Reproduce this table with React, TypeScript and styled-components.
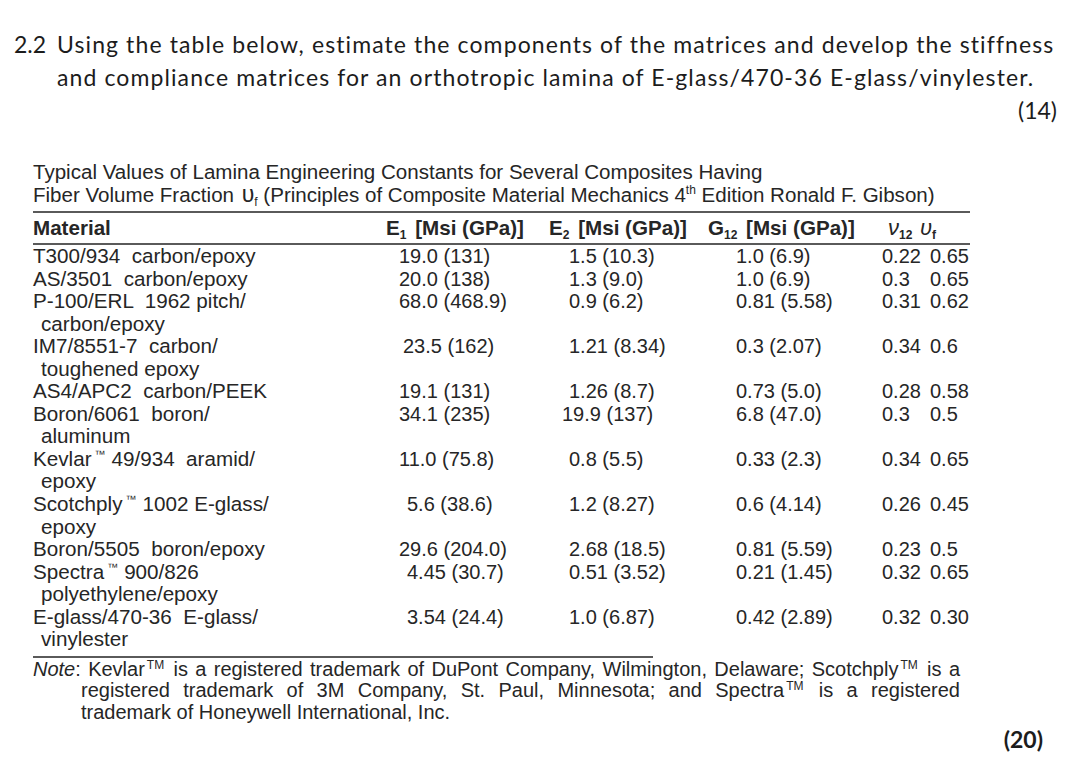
import React from 'react';
import styled, { createGlobalStyle } from 'styled-components';

const Global = createGlobalStyle`
  html, body { margin: 0; padding: 0; background: #ffffff; }
  body { width: 1080px; height: 777px; overflow: hidden; }
`;

const Page = styled.div`
  width: 1080px;
  height: 777px;
  box-sizing: border-box;
  padding: 28px 23px 0 14px;
  color: #1c1c1c;
  display: flex;
  flex-direction: column;
`;

const Question = styled.div`
  font-family: Lato, "Open Sans", sans-serif;
  font-size: 23px;
  line-height: 33px;
  display: flex;
`;

const QNum = styled.span`
  width: 43px;
  flex: none;
`;

const QBody = styled.div`
  flex: 1;
`;

const QLine = styled.div`
  letter-spacing: 1.1px;
  white-space: nowrap;
`;

const Marks = styled.div<{ $bold?: boolean; $right?: number }>`
  font-family: Lato, "Open Sans", sans-serif;
  font-size: 23px;
  line-height: 33px;
  text-align: right;
  font-weight: ${(p) => (p.$bold ? 700 : 400)};
  margin-right: ${(p) => p.$right ?? 0}px;
`;

const TableBlock = styled.div`
  margin: 33px 0 0 19px;
  width: 937px;
  font-family: "Liberation Sans", Arial, sans-serif;
  font-size: 20px;
  color: #262626;
`;

const Title = styled.div`
  font-size: 20.55px;
  line-height: 23px;
  white-space: nowrap;
`;

const Upsilon = styled.span`
  font-size: 23px;
  margin-left: 2px;
`;

const Rule = styled.div<{ $width?: number; $top?: number }>`
  height: 0;
  border-top: 2px solid #5a5a5a;
  width: ${(p) => (p.$width ? `${p.$width}px` : '100%')};
  margin-top: ${(p) => p.$top ?? 0}px;
`;

const cols = '353px 163px 159px 174px 38px 50px';

const HeaderRow = styled.div`
  display: grid;
  grid-template-columns: ${cols};
  height: 30px;
  align-items: center;
  font-weight: 700;
  font-size: 20.6px;
  white-space: nowrap;
`;

const HeadCell = styled.div<{ $pad?: number }>`
  padding-left: ${(p) => p.$pad ?? 0}px;
`;

const Sub = styled.sub<{ $gap?: number }>`
  font-size: 12px;
  vertical-align: -4px;
  line-height: 0;
  margin-right: ${(p) => p.$gap ?? 0}px;
`;

const Greek = styled.span`
  font-style: italic;
  font-weight: 400;
  font-size: 22px;
`;

const Row = styled.div`
  display: grid;
  grid-template-columns: ${cols};
  line-height: 22.55px;
  white-space: pre;
`;

const MatCell = styled.div`
  font-size: 20.65px;
`;

const MatLine = styled.div<{ $cont?: boolean }>`
  padding-left: ${(p) => (p.$cont ? 8 : 0)}px;
`;

const Cell = styled.div<{ $pad: number }>`
  padding-left: ${(p) => p.$pad}px;
`;

const Sup = styled.sup`
  font-size: 11px;
  vertical-align: 8px;
  line-height: 0;
  margin: 0 6px 0 3px;
`;

const Note = styled.div`
  margin-top: 1px;
  width: 927px;
  box-sizing: border-box;
  padding-left: 48px;
  line-height: 21.5px;
`;

const NoteLine = styled.div<{ $first?: boolean; $justify?: boolean }>`
  margin-left: ${(p) => (p.$first ? -48 : 0)}px;
  text-align: ${(p) => (p.$justify ? 'justify' : 'left')};
  text-align-last: ${(p) => (p.$justify ? 'justify' : 'left')};
  white-space: nowrap;
`;

const Em = styled.span`
  font-style: italic;
`;

type R = {
  m: React.ReactNode[];
  e1: string;
  e1p?: number;
  e2: string;
  e2p?: number;
  g: string;
  v: string;
  u: string;
};

const TM = () => <Sup>™</Sup>;

const rows: R[] = [
  { m: ['T300/934  carbon/epoxy'], e1: '19.0 (131)', e2: '1.5 (10.3)', g: '1.0 (6.9)', v: '0.22', u: '0.65' },
  { m: ['AS/3501  carbon/epoxy'], e1: '20.0 (138)', e2: '1.3 (9.0)', g: '1.0 (6.9)', v: '0.3', u: '0.65' },
  { m: ['P-100/ERL  1962 pitch/', 'carbon/epoxy'], e1: '68.0 (468.9)', e2: '0.9 (6.2)', g: '0.81 (5.58)', v: '0.31', u: '0.62' },
  { m: ['IM7/8551-7  carbon/', 'toughened epoxy'], e1: '23.5 (162)', e1p: 17, e2: '1.21 (8.34)', g: '0.3 (2.07)', v: '0.34', u: '0.6' },
  { m: ['AS4/APC2  carbon/PEEK'], e1: '19.1 (131)', e2: '1.26 (8.7)', g: '0.73 (5.0)', v: '0.28', u: '0.58' },
  { m: ['Boron/6061  boron/', 'aluminum'], e1: '34.1 (235)', e2: '19.9 (137)', e2p: 13, g: '6.8 (47.0)', v: '0.3', u: '0.5' },
  { m: [<>Kevlar<TM />49/934  aramid/</>, 'epoxy'], e1: '11.0 (75.8)', e2: '0.8 (5.5)', g: '0.33 (2.3)', v: '0.34', u: '0.65' },
  { m: [<>Scotchply<TM />1002 E-glass/</>, 'epoxy'], e1: '5.6 (38.6)', e1p: 21, e2: '1.2 (8.27)', g: '0.6 (4.14)', v: '0.26', u: '0.45' },
  { m: ['Boron/5505  boron/epoxy'], e1: '29.6 (204.0)', e2: '2.68 (18.5)', g: '0.81 (5.59)', v: '0.23', u: '0.5' },
  { m: [<>Spectra<TM />900/826</>, 'polyethylene/epoxy'], e1: '4.45 (30.7)', e1p: 21, e2: '0.51 (3.52)', g: '0.21 (1.45)', v: '0.32', u: '0.65' },
  { m: ['E-glass/470-36  E-glass/', 'vinylester'], e1: '3.54 (24.4)', e1p: 21, e2: '1.0 (6.87)', g: '0.42 (2.89)', v: '0.32', u: '0.30' },
];

const NoteSup = styled.sup`
  font-size: 12px;
  vertical-align: 7px;
  line-height: 0;
  margin: 0 2px 0 2px;
`;

const OrdSup = styled.sup`
  font-size: 12px;
  line-height: 0;
`;

export default function App() {
  return (
    <>
      <Global />
      <Page>
        <Question>
          <QNum>2.2</QNum>
          <QBody>
            <QLine>Using the table below, estimate the components of the matrices and develop the stiffness</QLine>
            <QLine>and compliance matrices for an orthotropic lamina of E-glass/470-36 E-glass/vinylester.</QLine>
            <Marks>(14)</Marks>
          </QBody>
        </Question>

        <TableBlock>
          <Title>Typical Values of Lamina Engineering Constants for Several Composites Having</Title>
          <Title>
            Fiber Volume Fraction <Upsilon>υ</Upsilon>
            <Sub>f</Sub> (Principles of Composite Material Mechanics 4<OrdSup>th</OrdSup> Edition Ronald F. Gibson)
          </Title>
          <Rule $top={5} />
          <HeaderRow>
            <HeadCell>Material</HeadCell>
            <HeadCell>
              E<Sub $gap={3}>1</Sub> [Msi (GPa)]
            </HeadCell>
            <HeadCell>
              E<Sub $gap={3}>2</Sub> [Msi (GPa)]
            </HeadCell>
            <HeadCell>
              G<Sub $gap={3}>12</Sub> [Msi (GPa)]
            </HeadCell>
            <HeadCell $pad={6}>
              <Greek>ν</Greek>
              <Sub>12</Sub>
            </HeadCell>
            <HeadCell>
              <Greek>υ</Greek>
              <Sub>f</Sub>
            </HeadCell>
          </HeaderRow>
          <Rule />
          {rows.map((r, i) => (
            <Row key={i}>
              <MatCell>
                {r.m.map((l, j) => (
                  <MatLine key={j} $cont={j > 0}>
                    {l}
                  </MatLine>
                ))}
              </MatCell>
              <Cell $pad={r.e1p ?? 13}>{r.e1}</Cell>
              <Cell $pad={r.e2p ?? 20}>{r.e2}</Cell>
              <Cell $pad={28}>{r.g}</Cell>
              <Cell $pad={0}>{r.v}</Cell>
              <Cell $pad={10}>{r.u}</Cell>
            </Row>
          ))}
          <Rule $width={620} $top={5} />
          <Note>
            <NoteLine $first $justify>
              <Em>Note</Em>: Kevlar<NoteSup>TM</NoteSup> is a registered trademark of DuPont Company, Wilmington, Delaware; Scotchply<NoteSup>TM</NoteSup> is a
            </NoteLine>
            <NoteLine $justify>
              registered trademark of 3M Company, St. Paul, Minnesota; and Spectra<NoteSup>TM</NoteSup> is a registered
            </NoteLine>
            <NoteLine>trademark of Honeywell International, Inc.</NoteLine>
          </Note>
        </TableBlock>

        <Marks $bold $right={14}>(20)</Marks>
      </Page>
    </>
  );
}
